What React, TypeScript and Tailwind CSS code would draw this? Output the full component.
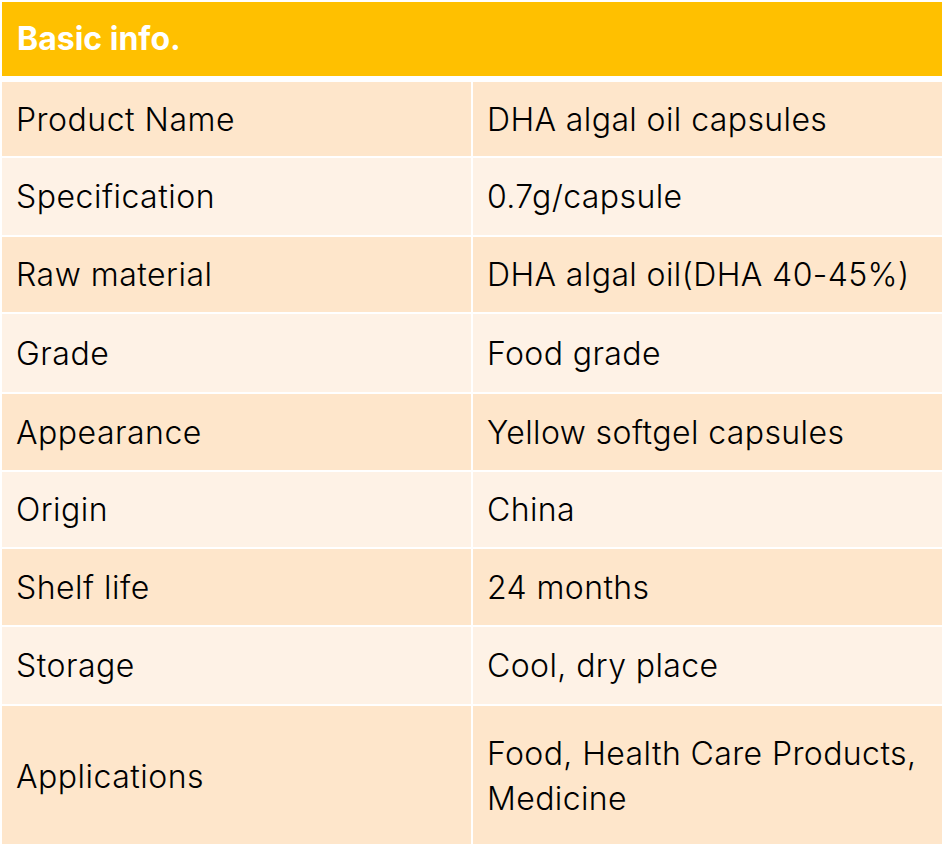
import React from "react";

const rows: { label: string; value: React.ReactNode; h: string; bg: string }[] = [
  { label: "Product Name", value: "DHA algal oil capsules", h: "h-[74px]", bg: "bg-[#fee6cb]" },
  { label: "Specification", value: "0.7g/capsule", h: "h-[77px]", bg: "bg-[#fef2e6]" },
  { label: "Raw material", value: "DHA algal oil(DHA 40-45%)", h: "h-[75px]", bg: "bg-[#fee6cb]" },
  { label: "Grade", value: "Food grade", h: "h-[78px]", bg: "bg-[#fef2e6]" },
  { label: "Appearance", value: "Yellow softgel capsules", h: "h-[76px]", bg: "bg-[#fee6cb]" },
  { label: "Origin", value: "China", h: "h-[75px]", bg: "bg-[#fef2e6]" },
  { label: "Shelf life", value: "24 months", h: "h-[76px]", bg: "bg-[#fee6cb]" },
  { label: "Storage", value: "Cool, dry place", h: "h-[77px]", bg: "bg-[#fef2e6]" },
  {
    label: "Applications",
    value: (
      <>
        Food, Health Care Products,
        <br />
        Medicine
      </>
    ),
    h: "h-[140px]",
    bg: "bg-[#fee6cb]",
  },
];

export default function App() {
  return (
    <div
      className="w-[944px] h-[844px] overflow-hidden bg-white p-[2px] text-black"
      style={{ fontFamily: 'Inter, "Noto Sans CJK SC", sans-serif' }}
    >
      <div className="h-[74px] bg-[#ffc000] flex items-center pl-[15px] pb-[1px]">
        <span className="text-white font-bold text-[32px] leading-none tracking-[0px]">Basic info.</span>
      </div>
      <div className="mt-[6px] flex flex-col gap-[2px]">
        {rows.map((r) => (
          <div key={r.label} className={`grid grid-cols-[469px_469px] gap-[2px] ${r.h}`}>
            <div className={`${r.bg} flex items-center pl-[14px] text-[32px] font-light tracking-[0.5px] leading-[45px]`}>{r.label}</div>
            <div className={`${r.bg} flex items-center pl-[14px] text-[32px] font-light tracking-[0.4px] leading-[45px]`}>
              <div>{r.value}</div>
            </div>
          </div>
        ))}
      </div>
    </div>
  );
}
